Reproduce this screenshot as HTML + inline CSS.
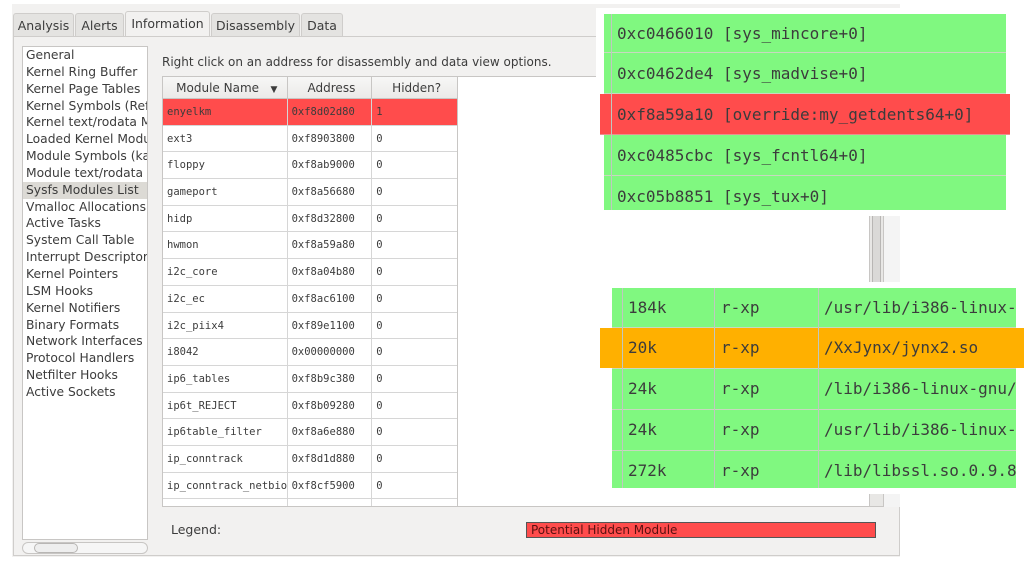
<!DOCTYPE html>
<html><head><style>
*{margin:0;padding:0;box-sizing:border-box}
body{width:1024px;height:561px;background:#fff;position:relative;overflow:hidden;font-family:"DejaVu Sans","Liberation Sans",sans-serif;color:#3c3c3c}
.abs{position:absolute}
.win{left:12px;top:4px;width:888px;height:553px;background:#f2f1f0}
.tab{top:13px;height:24px;font-size:12.5px;line-height:24px;text-align:center;background:#e4e3e1;border:1px solid #cfcdcb;border-bottom:none;border-radius:3px 3px 0 0;white-space:nowrap}
.panel{left:13px;top:36px;width:887px;height:520px;border:1px solid #cfcdcb;background:#f2f1f0}
.list{left:22px;top:46px;width:126px;height:494px;background:#fff;border:1px solid #c8c6c4;overflow:hidden}
.list div{height:16.85px;font-size:12.3px;line-height:17px;padding-left:3px;white-space:nowrap}
.tbl{left:162px;top:76px;width:296px;height:431px;background:#fff;border:1px solid #c8c6c4;overflow:hidden}
.hdr{height:22px;font-size:12px;line-height:22px;background:linear-gradient(#f7f7f6,#ebeae8);border-bottom:1px solid #c8c6c4;display:flex}
.row{height:26.7px;display:flex;font-family:"DejaVu Sans Mono",monospace;font-size:10.5px;line-height:26px;border-bottom:1px solid #d6d6d6}
.c1{width:125px;border-right:1px solid #d6d6d6;padding-left:4px;overflow:hidden;white-space:nowrap}
.c2{width:85px;border-right:1px solid #d6d6d6;padding-left:4px}
.c3{width:85px;padding-left:4px}
.hdr .c1,.hdr .c2,.hdr .c3{text-align:center;font-family:"DejaVu Sans",sans-serif;border-color:#c8c6c4}
.red{background:#ff4c4c}
.mono{font-family:"DejaVu Sans Mono",monospace;font-size:16px;white-space:nowrap;overflow:hidden}
.g{background:#80f880}
</style></head><body>
<div class="abs win"></div>
<div class="abs tab" style="left:13px;width:61px">Analysis</div>
<div class="abs tab" style="left:75px;width:49px">Alerts</div>
<div class="abs tab" style="left:125px;width:85px;top:11px;height:27px;background:#f2f1f0">Information</div>
<div class="abs tab" style="left:211px;width:89px">Disassembly</div>
<div class="abs tab" style="left:301px;width:42px">Data</div>
<div class="abs panel"></div>
<div class="abs list">
<div>General</div><div>Kernel Ring Buffer</div><div>Kernel Page Tables</div><div>Kernel Symbols (Reference)</div><div>Kernel text/rodata Mismatch</div><div>Loaded Kernel Modules</div><div>Module Symbols (kallsyms)</div><div>Module text/rodata</div><div style="background:#dcdad5">Sysfs Modules List</div><div>Vmalloc Allocations</div><div>Active Tasks</div><div>System Call Table</div><div>Interrupt Descriptor</div><div>Kernel Pointers</div><div>LSM Hooks</div><div>Kernel Notifiers</div><div>Binary Formats</div><div>Network Interfaces</div><div>Protocol Handlers</div><div>Netfilter Hooks</div><div>Active Sockets</div>
</div>
<div class="abs" style="left:22px;top:542px;width:126px;height:12px;border:1px solid #c8c6c4;border-radius:6px;background:#f6f6f6"></div>
<div class="abs" style="left:34px;top:543px;width:44px;height:10px;border:1px solid #b8b6b4;border-radius:5px;background:#eee"></div>
<div class="abs" style="left:162px;top:55px;font-size:12px;white-space:nowrap">Right click on an address for disassembly and data view options.</div>
<div class="abs tbl">
<div class="hdr"><div class="c1">Module Name &nbsp; <span style="font-size:9px">▼</span></div><div class="c2">Address</div><div class="c3">Hidden?</div></div>
<div class="row red"><div class="c1">enyelkm</div><div class="c2">0xf8d02d80</div><div class="c3">1</div></div>
<div class="row"><div class="c1">ext3</div><div class="c2">0xf8903800</div><div class="c3">0</div></div>
<div class="row"><div class="c1">floppy</div><div class="c2">0xf8ab9000</div><div class="c3">0</div></div>
<div class="row"><div class="c1">gameport</div><div class="c2">0xf8a56680</div><div class="c3">0</div></div>
<div class="row"><div class="c1">hidp</div><div class="c2">0xf8d32800</div><div class="c3">0</div></div>
<div class="row"><div class="c1">hwmon</div><div class="c2">0xf8a59a80</div><div class="c3">0</div></div>
<div class="row"><div class="c1">i2c_core</div><div class="c2">0xf8a04b80</div><div class="c3">0</div></div>
<div class="row"><div class="c1">i2c_ec</div><div class="c2">0xf8ac6100</div><div class="c3">0</div></div>
<div class="row"><div class="c1">i2c_piix4</div><div class="c2">0xf89e1100</div><div class="c3">0</div></div>
<div class="row"><div class="c1">i8042</div><div class="c2">0x00000000</div><div class="c3">0</div></div>
<div class="row"><div class="c1">ip6_tables</div><div class="c2">0xf8b9c380</div><div class="c3">0</div></div>
<div class="row"><div class="c1">ip6t_REJECT</div><div class="c2">0xf8b09280</div><div class="c3">0</div></div>
<div class="row"><div class="c1">ip6table_filter</div><div class="c2">0xf8a6e880</div><div class="c3">0</div></div>
<div class="row"><div class="c1">ip_conntrack</div><div class="c2">0xf8d1d880</div><div class="c3">0</div></div>
<div class="row"><div class="c1">ip_conntrack_netbios</div><div class="c2">0xf8cf5900</div><div class="c3">0</div></div>
<div class="row"><div class="c1">iptable</div><div class="c2">0xf8cfdf00</div><div class="c3">0</div></div>
</div>
<div class="abs" style="left:458px;top:76px;width:412px;height:431px;background:#fff;border:1px solid #c8c6c4;border-left:none"></div>
<div class="abs" style="left:869px;top:76px;width:15px;height:431px;background:#e8e7e5;border:1px solid #c8c6c4"></div>
<div class="abs" style="left:872px;top:210px;width:9px;height:80px;background:#dad9d7;border:1px solid #b8b6b4;border-radius:4px"></div>
<div class="abs" style="left:884px;top:76px;width:16px;height:431px;background:#f4f4f4"></div>
<div class="abs" style="left:171px;top:522px;font-size:12.5px">Legend:</div>
<div class="abs red" style="left:526px;top:522px;width:350px;height:16px;border:1px solid #555;font-size:12px;line-height:14px;padding-left:4px;color:#5a1010;white-space:nowrap">Potential Hidden Module</div>

<!-- overlay 1 -->
<div class="abs" style="left:596px;top:8px;width:418px;height:208px;background:#fff"></div>
<div class="abs mono g" style="left:604px;top:14px;width:402px;height:196px"></div>
<div class="abs mono g" style="left:604px;top:14px;width:402px;height:39px;line-height:39px;padding-left:13px;border-bottom:1px solid #c8d8c0">0xc0466010 [sys_mincore+0]</div>
<div class="abs mono g" style="left:604px;top:53px;width:402px;height:41px;line-height:41px;padding-left:13px;border-bottom:1px solid #c8d8c0">0xc0462de4 [sys_madvise+0]</div>
<div class="abs mono red" style="left:600px;top:94px;width:410px;height:41px;line-height:41px;padding-left:17px;border-bottom:1px solid #e89090">0xf8a59a10 [override:my_getdents64+0]</div>
<div class="abs mono g" style="left:604px;top:135px;width:402px;height:41px;line-height:41px;padding-left:13px;border-bottom:1px solid #c8d8c0">0xc0485cbc [sys_fcntl64+0]</div>
<div class="abs mono g" style="left:604px;top:176px;width:402px;height:34px;line-height:41px;padding-left:13px">0xc05b8851 [sys_tux+0]</div>
<div class="abs" style="left:611px;top:14px;width:1px;height:196px;background:#c0c8c0"></div>

<!-- overlay 2 -->
<div class="abs" style="left:604px;top:282px;width:420px;height:212px;background:#fff"></div>
<div class="abs g" style="left:612px;top:288px;width:404px;height:200px"></div>
<div class="abs" style="left:600px;top:328px;width:424px;height:40px;background:#ffb000"></div>
<div class="abs" style="left:612px;top:327px;width:404px;height:1px;background:#c8d8c0"></div>
<div class="abs" style="left:612px;top:368px;width:404px;height:1px;background:#c8d8c0"></div>
<div class="abs" style="left:612px;top:409px;width:404px;height:1px;background:#c8d8c0"></div>
<div class="abs" style="left:612px;top:450px;width:404px;height:1px;background:#c8d8c0"></div>
<div class="abs" style="left:622px;top:288px;width:1px;height:200px;background:#c0c8c0"></div>
<div class="abs" style="left:714px;top:288px;width:1px;height:200px;background:#c0c8c0"></div>
<div class="abs" style="left:818px;top:288px;width:1px;height:200px;background:#c0c8c0"></div>
<div class="abs mono" style="left:628px;top:288px;line-height:39px">184k</div>
<div class="abs mono" style="left:721px;top:288px;line-height:39px">r-xp</div>
<div class="abs mono" style="left:824px;top:288px;width:192px;line-height:39px">/usr/lib/i386-linux-gnu</div>
<div class="abs mono" style="left:628px;top:328px;line-height:40px">20k</div>
<div class="abs mono" style="left:721px;top:328px;line-height:40px">r-xp</div>
<div class="abs mono" style="left:824px;top:328px;width:192px;line-height:40px">/XxJynx/jynx2.so</div>
<div class="abs mono" style="left:628px;top:369px;line-height:40px">24k</div>
<div class="abs mono" style="left:721px;top:369px;line-height:40px">r-xp</div>
<div class="abs mono" style="left:824px;top:369px;width:192px;line-height:40px">/lib/i386-linux-gnu/</div>
<div class="abs mono" style="left:628px;top:410px;line-height:40px">24k</div>
<div class="abs mono" style="left:721px;top:410px;line-height:40px">r-xp</div>
<div class="abs mono" style="left:824px;top:410px;width:192px;line-height:40px">/usr/lib/i386-linux-gnu</div>
<div class="abs mono" style="left:628px;top:451px;line-height:40px">272k</div>
<div class="abs mono" style="left:721px;top:451px;line-height:40px">r-xp</div>
<div class="abs mono" style="left:824px;top:451px;width:192px;line-height:40px">/lib/libssl.so.0.9.8</div>
</body></html>
